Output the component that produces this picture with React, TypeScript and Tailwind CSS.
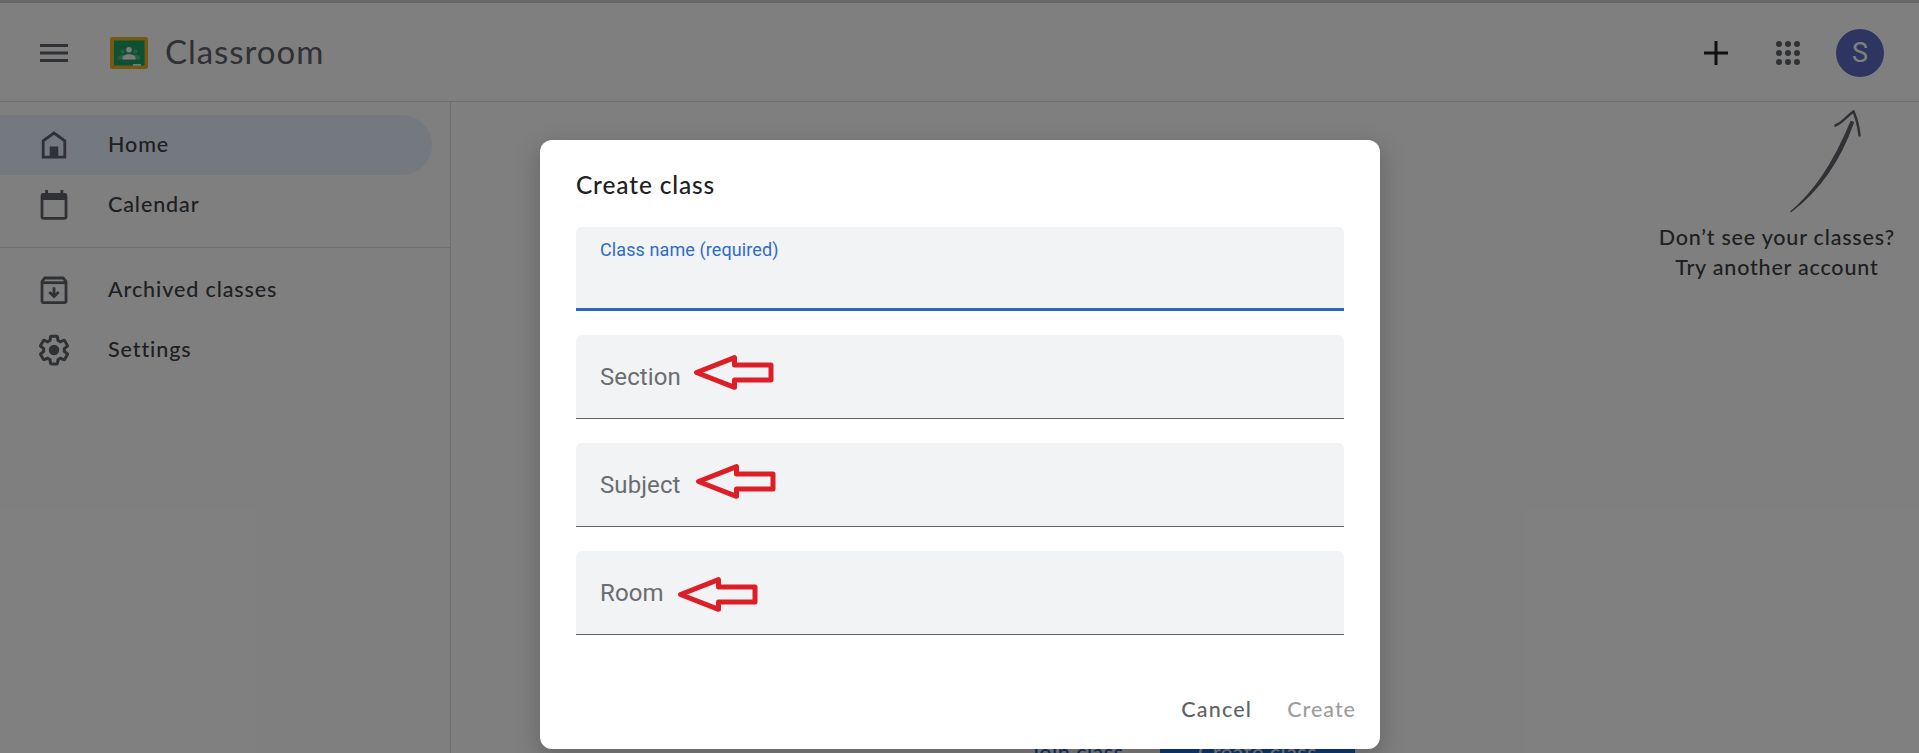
import React from "react";

interface NavItem {
  label: string;
  icon: React.ReactNode;
  active?: boolean;
}

interface FormField {
  label: string;
  arrowClass: string;
}

const HomeIcon = () => (
  <svg width="36" height="36" viewBox="0 0 36 36" fill="none">
    <path d="M7.200 30.200V13.800L18 6l10.800 7.800v16.400z" stroke="#5f6368" strokeWidth="2.800" />
    <path d="M13.700 19.500h8.600v11h-8.600z" fill="#5f6368" />
  </svg>
);

const CalendarIcon = () => (
  <svg width="36" height="36" viewBox="0 0 36 36" fill="none">
    <rect x="6" y="7.500" width="24" height="23.800" rx="1.600" stroke="#5f6368" strokeWidth="2.800" />
    <path d="M6 6.500h24V13H6zM9.200 3h2.800v5H9.200zM24.500 3h2.800v5h-2.800z" fill="#5f6368" />
  </svg>
);

const ArchiveIcon = () => (
  <svg width="36" height="36" viewBox="0 0 36 36" fill="none" stroke="#5f6368" strokeWidth="2.800">
    <path d="M6 9.600l2.600-3.600h18.800l2.600 3.600v19.400a1.600 1.600 0 0 1-1.600 1.600H7.600A1.600 1.600 0 0 1 6 29z" strokeLinejoin="round" />
    <path d="M6 10.700h24" />
    <path d="M18 15.200v9M13.300 20l4.700 4.600 4.700-4.600" />
  </svg>
);

const SettingsIcon = () => (
  <svg width="36" height="36" viewBox="0 0 24 24">
    <path
      fill="#5f6368"
      d="M13.850 22.250h-3.700c-.740 0-1.360-.540-1.450-1.270l-.270-1.890c-.270-.140-.530-.290-.790-.460l-1.800.720c-.700.260-1.470-.030-1.810-.650L2.200 15.530c-.350-.660-.200-1.440.360-1.880l1.530-1.190c-.010-.150-.020-.300-.020-.460 0-.150.010-.310.020-.460l-1.520-1.190c-.590-.450-.740-1.260-.370-1.880l1.850-3.190c.340-.620 1.110-.900 1.790-.630l1.810.730c.260-.170.520-.320.780-.460l.270-1.910c.090-.700.710-1.250 1.440-1.250h3.700c.740 0 1.360.540 1.450 1.270l.270 1.890c.270.140.530.290.790.460l1.800-.720c.710-.260 1.480.030 1.820.650l1.840 3.180c.360.660.200 1.440-.360 1.880l-1.520 1.190c.010.150.020.300.020.460s-.010.310-.020.460l1.520 1.190c.560.450.720 1.230.370 1.860l-1.860 3.220c-.340.620-1.110.900-1.800.630l-1.800-.720c-.260.170-.520.320-.780.460l-.270 1.910c-.100.680-.720 1.220-1.460 1.220zm-3.230-2h2.760l.370-2.550.530-.220c.440-.180.880-.440 1.340-.780l.450-.340 2.380.960 1.380-2.400-2.030-1.580.070-.560c.030-.260.060-.510.060-.780s-.030-.530-.060-.780l-.070-.560 2.030-1.580-1.390-2.400-2.390.960-.450-.350c-.420-.320-.870-.580-1.330-.770l-.520-.220-.370-2.550h-2.760l-.370 2.550-.530.210c-.440.190-.880.440-1.340.790l-.450.330-2.380-.950-1.390 2.390 2.030 1.580-.070.560a7 7 0 0 0-.060.790c0 .260.020.530.060.780l.070.560-2.030 1.580 1.380 2.400 2.390-.960.450.350c.430.330.860.580 1.330.770l.530.220z"
    />
    <circle cx="12" cy="12" r="3.500" fill="#5f6368" />
  </svg>
);

const ClassroomLogo = () => (
  <svg width="38" height="32" viewBox="0 0 38 32">
    <rect width="38" height="32" rx="2.500" fill="#e6b222" />
    <path d="M4 3.500h30.500v25H4z" fill="#1da164" />
    <g fill="#57bb8a">
      <circle cx="12.500" cy="14.500" r="2" />
      <circle cx="25.500" cy="14.500" r="2" />
      <path d="M8 22.500v-1.500c0-2 2.600-3.200 5-3.200h12c2.400 0 5 1.200 5 3.200v1.500z" />
    </g>
    <circle cx="19" cy="12.800" r="2.800" fill="#f7f7f7" />
    <path d="M12.500 22.500v-1.700c0-2.200 3.600-3.600 6.500-3.600s6.500 1.400 6.500 3.600v1.700z" fill="#f7f7f7" />
    <path d="M23 27h8v1.800h-8z" fill="#f1f1f1" />
  </svg>
);

const AppsIcon = () => (
  <svg width="24" height="24" viewBox="0 0 24 24" fill="#5f6368">
    {[3, 12, 21].map((y) =>
      [3, 12, 21].map((x) => <circle key={`${x}-${y}`} cx={x} cy={y} r="3" />)
    )}
  </svg>
);

const RedArrow = ({ className }: { className: string }) => (
  <svg className={`absolute ${className}`} width="80" height="36" viewBox="0 0 80 36" fill="none">
    <path
      d="M2.500 17.500L40.500 2.700v7.300h36.500v15H40.500v7.300z"
      stroke="#dc1f26"
      strokeWidth="5"
      strokeLinejoin="round"
    />
  </svg>
);

const MAIN_NAV: NavItem[] = [
  { label: "Home", icon: <HomeIcon />, active: true },
  { label: "Calendar", icon: <CalendarIcon /> },
];

const MORE_NAV: NavItem[] = [
  { label: "Archived classes", icon: <ArchiveIcon /> },
  { label: "Settings", icon: <SettingsIcon /> },
];

const FIELDS: FormField[] = [
  { label: "Section", arrowClass: "left-[118px] top-[20px]" },
  { label: "Subject", arrowClass: "left-[120px] top-[21px]" },
  { label: "Room", arrowClass: "left-[102px] top-[26px]" },
];

const NavRow = ({ item }: { item: NavItem }) => (
  <a
    className={`flex h-[60px] items-center gap-9 pl-9 text-[21.5px] font-medium text-[#3c4043] ${
      item.active ? "mr-[18px] rounded-r-full bg-[#e8f0fe]" : ""
    }`}
  >
    {item.icon}
    <span className="pb-px tracking-[0.9px]">{item.label}</span>
  </a>
);

export default function App() {
  return (
    <div className="relative flex h-screen flex-col overflow-hidden bg-white font-[Lato,sans-serif]">
      {/* Header */}
      <header className="flex h-[102px] shrink-0 items-center border-b border-t-[3px] border-b-[#dadce0] border-t-[#cfcfcf] pl-10 pr-[35px] pt-[2px]">
        <svg width="28" height="18" viewBox="0 0 28 18" fill="#5f6368">
          <path d="M0 0h28v3H0zM0 7.500h28v3H0zM0 15h28v3H0z" />
        </svg>
        <div className="ml-[42px] flex items-center gap-[17px]">
          <ClassroomLogo />
          <span className="pb-[3px] text-[33px] leading-none tracking-[0.95px] text-[#5f6368]">Classroom</span>
        </div>
        <div className="ml-auto flex items-center">
          <svg width="24" height="24" viewBox="0 0 24 24">
            <path d="M10.500 0h3v10.500H24v3H13.500V24h-3V13.500H0v-3h10.500z" fill="#202124" />
          </svg>
          <div className="ml-12">
            <AppsIcon />
          </div>
          <div className="ml-9 flex size-12 items-center justify-center rounded-full bg-[#5c6bc0] font-[Roboto,sans-serif] text-[27px] text-white">
            S
          </div>
        </div>
      </header>

      <div className="flex min-h-0 flex-1">
        {/* Sidebar */}
        <nav className="w-[451px] shrink-0 border-r border-[#dadce0] pt-[13px]">
          {MAIN_NAV.map((item) => (
            <NavRow key={item.label} item={item} />
          ))}
          <div className="my-3 border-t border-[#dadce0]" />
          {MORE_NAV.map((item) => (
            <NavRow key={item.label} item={item} />
          ))}
        </nav>

        {/* Empty state */}
        <main className="flex flex-1 flex-col justify-between">
          <div className="flex flex-col items-end pr-[24px] pt-[8px] text-[21.5px] font-medium text-[#3c4043]">
            <svg className="mr-[34px]" width="72" height="104" viewBox="0 0 72 104" fill="none">
              <path d="M1.500 102C24 83 43 57 62 11.500l2.500.8C51 51 31 80 1.500 102z" fill="#5f6368" stroke="#5f6368" strokeWidth="1.200" />
              <path d="M46.500 15.500C53 13 58 6 64.500 1.500c3 7 5 14 6 24" stroke="#5f6368" strokeWidth="2.500" strokeLinecap="round" />
            </svg>
            <p className="mt-[8px] text-center leading-[30px] tracking-[0.8px]">
              Don’t see your classes?
              <br />
              Try another account
            </p>
          </div>
          <div className="-mb-[21px] flex h-11 items-center pl-[579px] text-[21.5px] font-medium tracking-[0.5px]">
            <span className="w-[130px] text-[#1967d2]">Join class</span>
            <span className="flex h-11 w-[195px] items-center justify-center rounded bg-[#1a73e8] text-white">
              Create class
            </span>
          </div>
        </main>
      </div>

      {/* Create class dialog */}
      <div className="absolute inset-0 flex items-start justify-center bg-black/50 pl-px pt-[140px]">
        <section className="flex h-[609px] w-[840px] flex-col rounded-xl bg-white px-9 pt-7 shadow-[0_8px_24px_2px_rgba(0,0,0,0.2)]">
          <h2 className="h-[59px] text-[24.5px] font-medium leading-[34px] tracking-[0.85px] text-[#202124]">
            Create class
          </h2>
          <div className="flex flex-col gap-6">
            <div className="h-[84px] rounded-t-md border-b-[3px] border-[#2a66b8] bg-[#f1f3f4] px-6 pt-[9px] font-[Roboto,sans-serif] text-[18px] tracking-[0.1px] text-[#2f6cc4]">
              Class name (required)
            </div>
            {FIELDS.map((field) => (
              <div
                key={field.label}
                className="relative flex h-[84px] items-center rounded-t-md border-b border-[#5f6368] bg-[#f1f3f4] px-6 font-[Roboto,sans-serif] text-[24px] tracking-[0.1px] text-[#6a6d71]"
              >
                {field.label}
                <RedArrow className={field.arrowClass} />
              </div>
            ))}
          </div>
          <div className="-mr-3 mt-[59px] flex justify-end gap-[35px] text-[21.5px] font-medium leading-[30px]">
            <button className="tracking-[1.2px] text-[#5f6368]">Cancel</button>
            <button className="tracking-[1px] text-[#9e9e9e]">Create</button>
          </div>
        </section>
      </div>
    </div>
  );
}
